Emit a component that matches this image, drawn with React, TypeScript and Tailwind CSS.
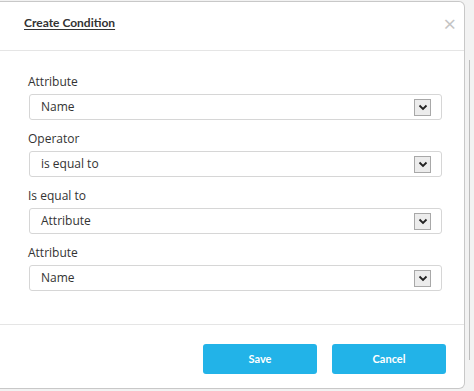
const fields = [
  { label: 'Attribute', value: 'Name' },
  { label: 'Operator', value: 'is equal to' },
  { label: 'Is equal to', value: 'Attribute' },
  { label: 'Attribute', value: 'Name' },
]

function SelectBox({ value }: { value: string }) {
  return (
    <div className="flex h-[26px] items-center justify-between rounded-[3px] border border-[#d6d6d6] bg-white pl-[11px] pr-[10px]">
      <span className="text-[12px] text-[#333]">{value}</span>
      <span className="flex h-[17px] w-[17px] items-center justify-center border border-[#a8a8a8] bg-[#ececec]">
        <svg width="10" height="7" viewBox="0 0 10 7">
          <path d="M1.5 1.5 L5 5 L8.5 1.5" fill="none" stroke="#222" strokeWidth="1.8" />
        </svg>
      </span>
    </div>
  )
}

export default function App() {
  return (
    <div className="flex h-[391px] w-[474px] bg-[#f2f2f2] font-['Open_Sans',sans-serif]">
      <div className="mt-[1px] flex h-[388px] w-[465px] flex-col rounded-tr-[6px] rounded-br-[6px] border-t border-r border-b border-[#c8c8c8] bg-white">
        <div className="flex h-[49px] items-start justify-between border-b border-[#e5e5e5] pt-[12px] pl-[24px] pr-[8px]">
          <span className="font-['Lato',sans-serif] text-[12px] leading-[18px] font-bold text-[#333] underline underline-offset-2">
            Create Condition
          </span>
          <span className="text-[22px] leading-[18px] text-[#c4c4c4]">×</span>
        </div>
        <div className="flex h-[274px] flex-col gap-[11px] border-b border-[#e5e5e5] pt-[23px] pr-[22px] pl-[29px]">
          {fields.map((f, i) => (
            <div key={i} className="flex flex-col">
              <span className="mb-[4px] -ml-px text-[12px] leading-[16px] text-[#333]">{f.label}</span>
              <SelectBox value={f.value} />
            </div>
          ))}
        </div>
        <div className="flex flex-1 items-start justify-end gap-[15px] pt-[19px] pr-[18px]">
          <button className="h-[30px] w-[114px] rounded-[3px] bg-[#22b3e8] font-['Lato',sans-serif] text-[11px] font-bold text-white">
            Save
          </button>
          <button className="h-[30px] w-[114px] rounded-[3px] bg-[#22b3e8] font-['Lato',sans-serif] text-[11px] font-bold text-white">
            Cancel
          </button>
        </div>
      </div>
      <div className="mt-[60px] ml-[4px] h-[300px] w-px bg-[#bdbdbd]" />
    </div>
  )
}
